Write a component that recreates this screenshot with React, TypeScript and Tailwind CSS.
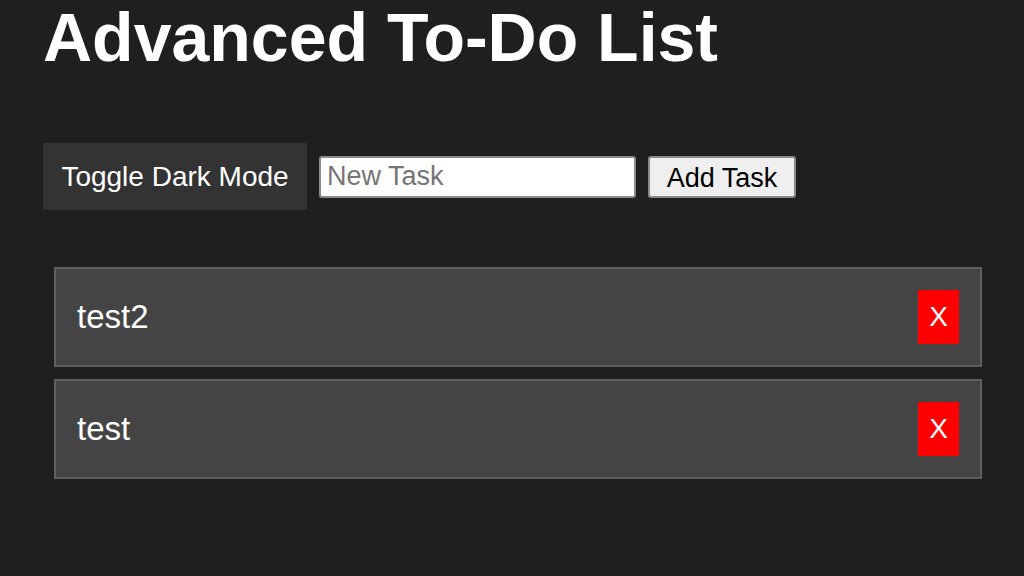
import { useState } from "react";

interface Task {
  id: number;
  text: string;
}

const App = () => {
  const [tasks, setTasks] = useState<Task[]>([
    { id: 2, text: "test2" },
    { id: 1, text: "test" },
  ]);
  const [draft, setDraft] = useState("");

  const addTask = () => {
    if (!draft.trim()) return;
    setTasks([{ id: Date.now(), text: draft.trim() }, ...tasks]);
    setDraft("");
  };

  return (
    <div className="min-h-screen bg-[#1f1f1f] px-[43px] pt-[3px] font-['Liberation_Sans',Arial,sans-serif] text-white">
      <h1 className="text-[68px] font-bold leading-none">Advanced To-Do List</h1>

      {/* Controls */}
      <div className="mt-[72px] flex items-center gap-[12px]">
        <button className="h-[67px] w-[264px] bg-[#333333] text-[28px] text-white">
          Toggle Dark Mode
        </button>
        <input
          value={draft}
          onChange={(e) => setDraft(e.target.value)}
          placeholder="New Task"
          className="h-[42px] w-[317px] rounded-[3px] border-2 border-[#8a8a8a] bg-white px-[6px] text-[27px] text-black placeholder:text-[#757575] outline-none"
        />
        <button
          onClick={addTask}
          className="h-[42px] w-[148px] rounded-[3px] border-2 border-[#8a8a8a] bg-[#efefef] text-[27px] text-black"
        >
          Add Task
        </button>
      </div>

      {/* Task list */}
      <ul className="mt-[57px] ml-[11px] mr-[-1px] flex flex-col gap-[12px]">
        {tasks.map((task) => (
          <li
            key={task.id}
            className="flex h-[100px] items-center justify-between border-2 border-[#5e5e5e] bg-[#444444] pl-[21px] pr-[21px]"
          >
            <span className="text-[33px]">{task.text}</span>
            <button
              onClick={() => setTasks(tasks.filter((t) => t.id !== task.id))}
              className="flex h-[54px] w-[41px] items-center justify-center bg-[#ff0000] text-[28px] text-white"
            >
              X
            </button>
          </li>
        ))}
      </ul>
    </div>
  );
};

export default App;
